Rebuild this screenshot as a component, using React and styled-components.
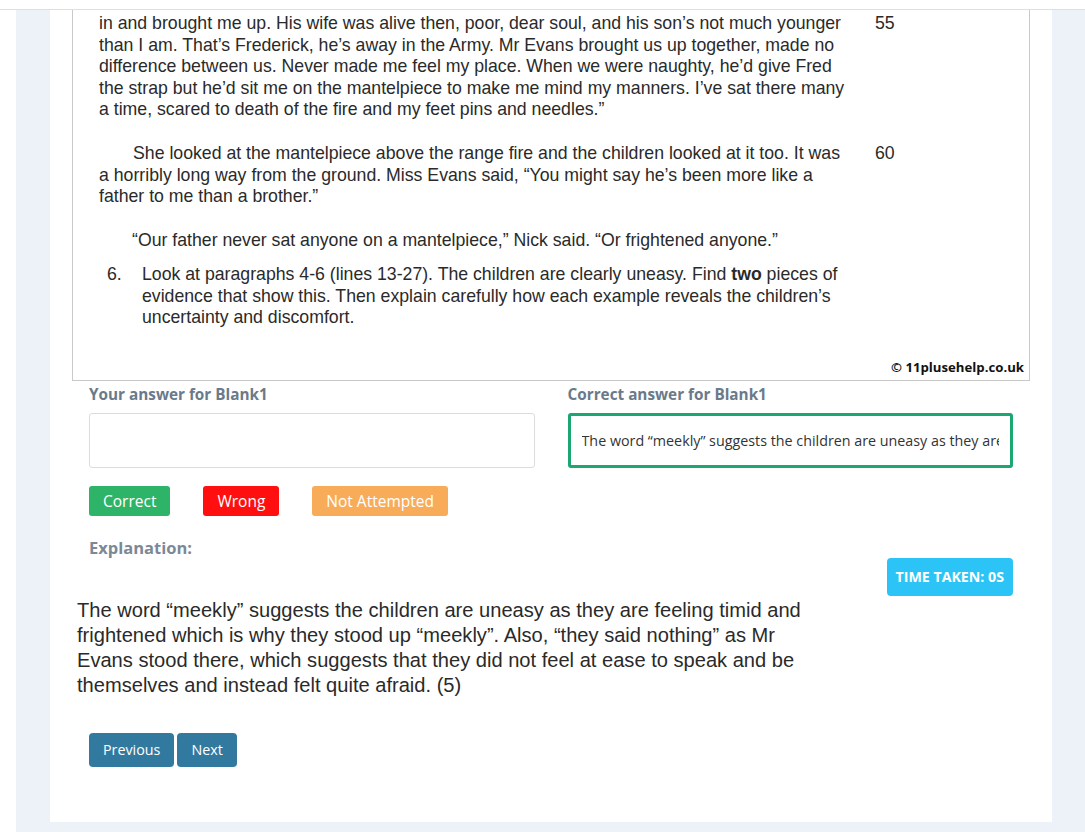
import React from "react";
import styled, { createGlobalStyle } from "styled-components";

const GlobalStyle = createGlobalStyle`
  html, body { margin: 0; padding: 0; background: #ffffff; }
  body { font-family: "Open Sans", "Liberation Sans", Arial, sans-serif; color: #333; }
  * { box-sizing: border-box; }
`;

const Header = styled.div`
  height: 10px;
  background: #ffffff;
  border-bottom: 1px solid #dedede;
`;

const Layout = styled.div`
  display: flex;
`;

const Sidebar = styled.div`
  width: 16px;
  flex: none;
  background: #ffffff;
`;

const Main = styled.main`
  flex: 1;
  min-width: 0;
  background: #edf2f9;
  padding: 0 33px 10px 34px;
`;

const Card = styled.section`
  background: #ffffff;
  padding: 0 22px 55px 22px;
`;

const Passage = styled.div`
  border: 1px solid #c9c9c9;
  border-top: none;
  padding: 3px 5px 4px 26px;
  font-family: "Liberation Sans", Arial, sans-serif;
  font-size: 17.7px;
  line-height: 21.5px;
  color: #2a2a2a;
`;

const Para = styled.div`
  display: grid;
  grid-template-columns: 776px 1fr;
  margin-top: ${(p) => p.$gap || 0}px;
  white-space: nowrap;
`;

const ParaText = styled.div`
  text-indent: ${(p) => p.$indent || 0}px;
`;

const LineNo = styled.div``;

const Question = styled.div`
  display: grid;
  grid-template-columns: 8px 35px auto;
  margin-top: 12.5px;
  white-space: nowrap;
`;

const Copyright = styled.div`
  margin-top: 29px;
  text-align: right;
  font-family: "Open Sans", sans-serif;
  font-weight: 700;
  font-size: 13.2px;
  line-height: 18px;
  color: #111;
`;

const Answers = styled.div`
  display: grid;
  grid-template-columns: minmax(0, 1fr) minmax(0, 1fr);
  column-gap: 33px;
  padding: 0 17px;
`;

const Label = styled.div`
  margin-top: 3px;
  font-size: 15.3px;
  font-weight: 700;
  line-height: 20px;
  color: #6a7a8a;
`;

const AnswerBox = styled.div`
  margin-top: 9px;
  height: 55px;
  border: ${(p) => (p.$correct ? "3px solid #1ba672" : "1px solid #dcdcdc")};
  border-radius: 3px;
  padding: 0 11px;
  display: flex;
  align-items: center;
  font-size: 14.3px;
  color: #333;
`;

const Clip = styled.span`
  display: block;
  min-width: 0;
  overflow: hidden;
  white-space: nowrap;
`;

const Marks = styled.div`
  display: flex;
  gap: 33px;
  margin-top: 18px;
  padding: 0 17px;
`;

const MarkButton = styled.button`
  height: 30px;
  padding: 0 14px;
  border: none;
  border-radius: 3px;
  background: ${(p) => p.$bg};
  color: #ffffff;
  font-family: "Open Sans", sans-serif;
  font-size: 15.5px;
`;

const ExplainLabel = styled.div`
  margin-top: 21px;
  padding: 0 17px;
  font-size: 16.5px;
  font-weight: 700;
  line-height: 22px;
  color: #7b8997;
`;

const BadgeRow = styled.div`
  display: flex;
  justify-content: flex-end;
  padding: 0 17px;
  margin-top: -1px;
`;

const Badge = styled.div`
  height: 38px;
  padding: 0 9px;
  display: flex;
  align-items: center;
  background: #2cc4f6;
  border-radius: 4px;
  color: #ffffff;
  font-size: 14.2px;
  font-weight: 700;
`;

const ExplainText = styled.div`
  margin-top: 2px;
  padding-left: 5px;
  font-family: "Liberation Sans", Arial, sans-serif;
  font-size: 20.1px;
  line-height: 25.3px;
  color: #2a2a2a;
  white-space: nowrap;
`;

const Nav = styled.div`
  display: flex;
  gap: 3px;
  margin-top: 34px;
  padding: 0 17px;
`;

const NavButton = styled.button`
  height: 34px;
  padding: 0 14px;
  border: none;
  border-radius: 4px;
  background: #32799f;
  color: #ffffff;
  font-family: "Open Sans", sans-serif;
  font-size: 14.3px;
`;

export default function App() {
  return (
    <>
      <GlobalStyle />
      <Header />
      <Layout>
        <Sidebar />
        <Main>
          <Card>
            <Passage>
              <Para>
                <ParaText>
                  in and brought me up. His wife was alive then, poor, dear soul, and his son’s not much younger
                  <br />
                  than I am. That’s Frederick, he’s away in the Army. Mr Evans brought us up together, made no
                  <br />
                  difference between us. Never made me feel my place. When we were naughty, he’d give Fred
                  <br />
                  the strap but he’d sit me on the mantelpiece to make me mind my manners. I’ve sat there many
                  <br />
                  a time, scared to death of the fire and my feet pins and needles.”
                </ParaText>
                <LineNo>55</LineNo>
              </Para>
              <Para $gap={22.5}>
                <ParaText $indent={34}>
                  She looked at the mantelpiece above the range fire and the children looked at it too. It was
                  <br />
                  a horribly long way from the ground. Miss Evans said, “You might say he’s been more like a
                  <br />
                  father to me than a brother.”
                </ParaText>
                <LineNo>60</LineNo>
              </Para>
              <Para $gap={22.5}>
                <ParaText $indent={33}>
                  “Our father never sat anyone on a mantelpiece,” Nick said. “Or frightened anyone.”
                </ParaText>
              </Para>
              <Question>
                <span />
                <span>6.</span>
                <span>
                  Look at paragraphs 4-6 (lines 13-27). The children are clearly uneasy. Find <b>two</b> pieces of
                  <br />
                  evidence that show this. Then explain carefully how each example reveals the children’s
                  <br />
                  uncertainty and discomfort.
                </span>
              </Question>
              <Copyright>© 11plusehelp.co.uk</Copyright>
            </Passage>

            <Answers>
              <div>
                <Label>Your answer for Blank1</Label>
                <AnswerBox />
              </div>
              <div>
                <Label>Correct answer for Blank1</Label>
                <AnswerBox $correct>
                  <Clip>
                    The word “meekly” suggests the children are uneasy as they are feeling timid and frightened
                  </Clip>
                </AnswerBox>
              </div>
            </Answers>

            <Marks>
              <MarkButton $bg="#2eb469">Correct</MarkButton>
              <MarkButton $bg="#ff0f0f">Wrong</MarkButton>
              <MarkButton $bg="#f8ac59">Not Attempted</MarkButton>
            </Marks>

            <ExplainLabel>Explanation:</ExplainLabel>
            <BadgeRow>
              <Badge>TIME TAKEN: 0S</Badge>
            </BadgeRow>
            <ExplainText>
              The word “meekly” suggests the children are uneasy as they are feeling timid and
              <br />
              frightened which is why they stood up “meekly”. Also, “they said nothing” as Mr
              <br />
              Evans stood there, which suggests that they did not feel at ease to speak and be
              <br />
              themselves and instead felt quite afraid. (5)
            </ExplainText>

            <Nav>
              <NavButton>Previous</NavButton>
              <NavButton>Next</NavButton>
            </Nav>
          </Card>
        </Main>
      </Layout>
    </>
  );
}
